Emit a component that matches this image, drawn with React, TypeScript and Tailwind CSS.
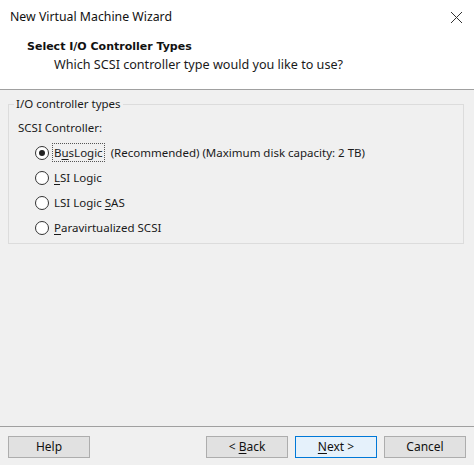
import React from "react";

const font = { fontFamily: '"Noto Sans", "Open Sans", sans-serif' };

function Radio({ checked }: { checked?: boolean }) {
  return (
    <span className="flex h-[14px] w-[14px] items-center justify-center rounded-full border border-[#333333] bg-white">
      {checked && <span className="h-[6px] w-[6px] rounded-full bg-[#222222]" />}
    </span>
  );
}

function Option({ u, pre = "", post, checked, note }: { pre?: string; u: string; post: string; checked?: boolean; note?: string }) {
  return (
    <div className="flex h-[25px] items-center">
      <Radio checked={checked} />
      <span className={`ml-[3px] px-[1px] leading-[17px] ${checked ? "border border-dotted border-[#555555]" : "border border-transparent"}`}>
        {pre}
        <span className="underline underline-offset-2">{u}</span>
        {post}
      </span>
      {note && <span className="ml-[6px]">{note}</span>}
    </div>
  );
}

function Button({ children, primary }: { children: React.ReactNode; primary?: boolean }) {
  return (
    <button
      className={`h-[22px] w-[82px] border text-[12px] text-[#111111] ${primary ? "border-[#0078d7] bg-[#e5f1fb]" : "border-[#adadad] bg-[#e1e1e1]"}`}
    >
      {children}
    </button>
  );
}

export default function App() {
  return (
    <div className="flex h-[465px] w-[474px] flex-col bg-white text-[11.5px] text-[#1a1a1a]" style={font}>
      {/* title bar */}
      <div className="flex h-[34px] items-center justify-between pl-[10px] pr-[11px]">
        <span className="text-[12.3px] text-[#111111]">New Virtual Machine Wizard</span>
        <svg width="13" height="13" viewBox="0 0 13 13">
          <path d="M1 1 L12 12 M12 1 L1 12" stroke="#333333" strokeWidth="1" />
        </svg>
      </div>

      {/* header */}
      <div className="flex h-[55px] flex-col pl-[27px]">
        <span className="mt-[4px] font-bold leading-[18px] text-[#111111]" style={{ fontFamily: '"DejaVu Sans", sans-serif', fontSize: "11px" }}>
          Select I/O Controller Types
        </span>
        <span className="ml-[27px] text-[12.6px] leading-[18px]">Which SCSI controller type would you like to use?</span>
      </div>

      {/* body */}
      <div className="flex flex-1 flex-col border-t border-[#a0a0a0] bg-[#f0f0f0] pr-[2px]">
        <fieldset className="mx-[8px] mt-[5px] h-[149px] border border-[#dcdcdc] pl-[9px] pr-[9px]">
          <legend className="ml-[-4px] px-[2px] leading-[18px]">I/O controller types</legend>
          <div className="mt-[6px] leading-[18px]">SCSI Controller:</div>
          <div className="ml-[17px] mt-[3px] flex flex-col">
            <Option u="u" pre="B" post="sLogic" checked note="(Recommended) (Maximum disk capacity: 2 TB)" />
            <Option u="L" post="SI Logic" />
            <Option u="S" pre="LSI Logic " post="AS" />
            <Option u="P" post="aravirtualized SCSI" />
          </div>
        </fieldset>
      </div>

      {/* footer */}
      <div className="flex h-[39px] items-start border-t border-[#a0a0a0] bg-[#f0f0f0] pl-[8px] pr-[8px] pt-[9px]">
        <Button>Help</Button>
        <div className="flex-1" />
        <div className="flex gap-[7px]">
          <Button>
            &lt; <span className="underline underline-offset-2">B</span>ack
          </Button>
          <Button primary>
            <span className="underline underline-offset-2">N</span>ext &gt;
          </Button>
          <Button>Cancel</Button>
        </div>
      </div>
    </div>
  );
}
